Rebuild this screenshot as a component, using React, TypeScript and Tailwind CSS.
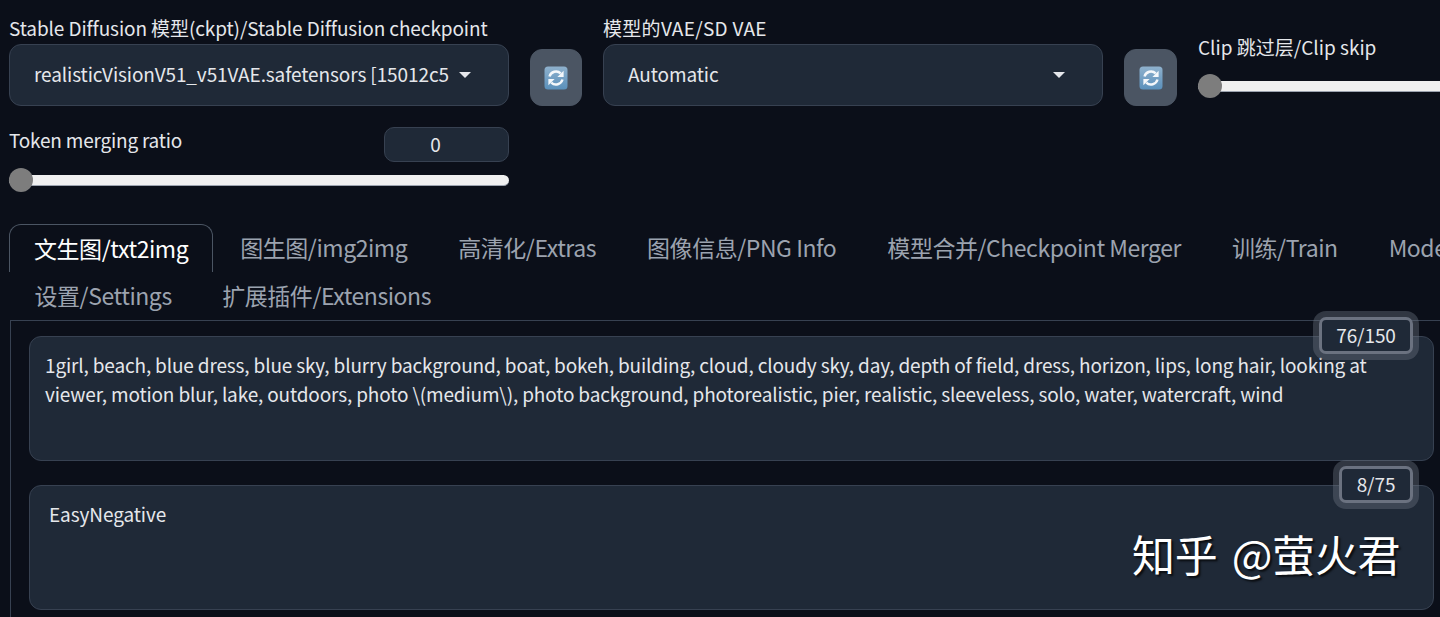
const FONT = "font-['Noto_Sans_CJK_SC','Noto_Sans',sans-serif]";

function RefreshButton({ width }: { width: string }) {
  return (
    <button className={`mt-[49px] flex h-[57px] ${width} shrink-0 items-center justify-center rounded-[12px] border border-[#4b5563] bg-[#4b5563]`}>
      <svg viewBox="0 0 24 24" className="h-[24px] w-[24px]">
        <defs>
          <linearGradient id="refreshBlue" x1="0" y1="0" x2="0" y2="1">
            <stop offset="0" stopColor="#8fb1cd" />
            <stop offset="1" stopColor="#5a90bb" />
          </linearGradient>
        </defs>
        <rect x="0.5" y="0.5" width="23" height="23" rx="3.5" fill="url(#refreshBlue)" />
        <path d="M5.5 10.5a6.8 6.8 0 0 1 11.2-3.2" fill="none" stroke="#f4f7fa" strokeWidth="2.4" />
        <path d="M19.6 4.8v6.2h-6.2z" fill="#f4f7fa" />
        <path d="M18.5 13.5a6.8 6.8 0 0 1-11.2 3.2" fill="none" stroke="#f4f7fa" strokeWidth="2.4" />
        <path d="M4.4 19.2V13h6.2z" fill="#f4f7fa" />
      </svg>
    </button>
  );
}

function Dropdown({ label, value, labelTracking }: { label: string; value: string; labelTracking: string }) {
  return (
    <div className="w-[500px] shrink-0">
      <div className={`h-[44px] pt-[13px] text-[19px] leading-[30px] ${labelTracking} text-[#e5e7eb] whitespace-nowrap`}>{label}</div>
      <div className="flex h-[62px] items-center rounded-[12px] border border-[#374151] bg-[#1f2937] pl-[24px]">
        <span className="w-[425px] whitespace-nowrap pb-[2px] text-[19px] tracking-[-0.1px] text-[#e5e7eb]">{value}</span>
        <span className="h-0 w-0 border-x-[6px] border-t-[6px] border-x-transparent border-t-[#e5e7eb]" />
      </div>
    </div>
  );
}

function Slider({ width }: { width: string }) {
  return (
    <div className={`relative flex h-[24px] items-center ${width}`}>
      <div className="h-[11px] w-full rounded-full border-b border-[#9ca3af] bg-[#f0f0f0]" />
      <div className="absolute left-0 top-0 h-[24px] w-[24px] rounded-full bg-[#7d7d7d]" />
    </div>
  );
}

function Counter({ text, width }: { text: string; width: string }) {
  return (
    <div className={`absolute right-[20px] -top-[20px] flex h-[37px] ${width} items-center justify-center rounded-[7px] border-[3px] border-[#6b7280] bg-[#1f2937] pb-[3px] text-[19px] tracking-[-0.1px] text-[#e5e7eb] shadow-[0_0_0_6px_rgba(107,114,128,0.4)]`}>
      {text}
    </div>
  );
}

const topTabs = ["图生图/img2img", "高清化/Extras", "图像信息/PNG Info", "模型合并/Checkpoint Merger", "训练/Train", "Model"];

export default function App() {
  return (
    <div className={`${FONT} relative h-[617px] w-[1440px] overflow-hidden bg-[#0b0f19]`}>
      <div className="flex gap-[21px] pl-[9px]">
        <Dropdown label="Stable Diffusion 模型(ckpt)/Stable Diffusion checkpoint" value="realisticVisionV51_v51VAE.safetensors [15012c5" labelTracking="tracking-[-0.1px]" />
        <RefreshButton width="w-[52px]" />
        <Dropdown label="模型的VAE/SD VAE" value="Automatic" labelTracking="tracking-[0.3px]" />
        <RefreshButton width="w-[53px]" />
        <div className="w-[300px] shrink-0">
          <div className="pt-[32px] text-[19px] leading-[30px] text-[#e5e7eb] whitespace-nowrap">Clip 跳过层/Clip skip</div>
          <div className="mt-[12px]">
            <Slider width="w-[300px]" />
          </div>
        </div>
      </div>

      <div className="ml-[9px] mt-[21px] w-[500px]">
        <div className="flex items-start justify-between">
          <span className="-mt-[2px] text-[19px] leading-[30px] tracking-[-0.2px] text-[#e5e7eb]">Token merging ratio</span>
          <div className="flex h-[35px] w-[125px] items-center justify-center rounded-[10px] border border-[#374151] bg-[#1f2937] pr-[22px] text-[19px] text-[#e5e7eb]">0</div>
        </div>
        <div className="mt-[6px]">
          <Slider width="w-[500px]" />
        </div>
      </div>

      <div className="ml-[9px] mt-[32px] flex h-[48px] items-start whitespace-nowrap text-[23px] leading-[46px] tracking-[-0.45px]">
        <div className="mr-[1.5px] h-[48px] rounded-t-[12px] border-x border-t border-[#4b5563] px-[24px] text-white">文生图/txt2img</div>
        {topTabs.map((tab) => (
          <div key={tab} className="px-[25.5px] text-[#9ca3af]">{tab}</div>
        ))}
      </div>
      <div className="ml-[9px] flex h-[48px] whitespace-nowrap text-[23px] leading-[46px] tracking-[-0.45px] text-[#9ca3af]">
        <div className="px-[25.5px]">设置/Settings</div>
        <div className="px-[25px]">扩展插件/Extensions</div>
      </div>

      <div className="ml-[10px] border-l border-t border-[#374151] pb-[20px] pl-[18px] pr-[6px] pt-[15px]">
        <div className="relative h-[125px] rounded-[12px] border border-[#374151] bg-[#1f2937] px-[15px] pt-[13px] text-[19px] leading-[29px] tracking-[-0.15px] text-[#e5e7eb]">
          <Counter text="76/150" width="w-[94px]" />
          1girl, beach, blue dress, blue sky, blurry background, boat, bokeh, building, cloud, cloudy sky, day, depth of field, dress, horizon, lips, long hair, looking at viewer, motion blur, lake, outdoors, photo \(medium\), photo background, photorealistic, pier, realistic, sleeveless, solo, water, watercraft, wind
        </div>
        <div className="relative mt-[24px] h-[125px] rounded-[12px] border border-[#374151] bg-[#1f2937] px-[19px] pt-[13px] text-[19px] leading-[29px] tracking-[-0.1px] text-[#e5e7eb]">
          <Counter text="8/75" width="w-[74px]" />
          EasyNegative
        </div>
      </div>

      <div className="absolute left-[1132px] top-[523px] whitespace-nowrap text-[43px] leading-[60px] tracking-[-0.3px] text-white [word-spacing:5px] [text-shadow:2px_2px_2px_rgba(0,0,0,0.7)]">知乎 @萤火君</div>
    </div>
  );
}
